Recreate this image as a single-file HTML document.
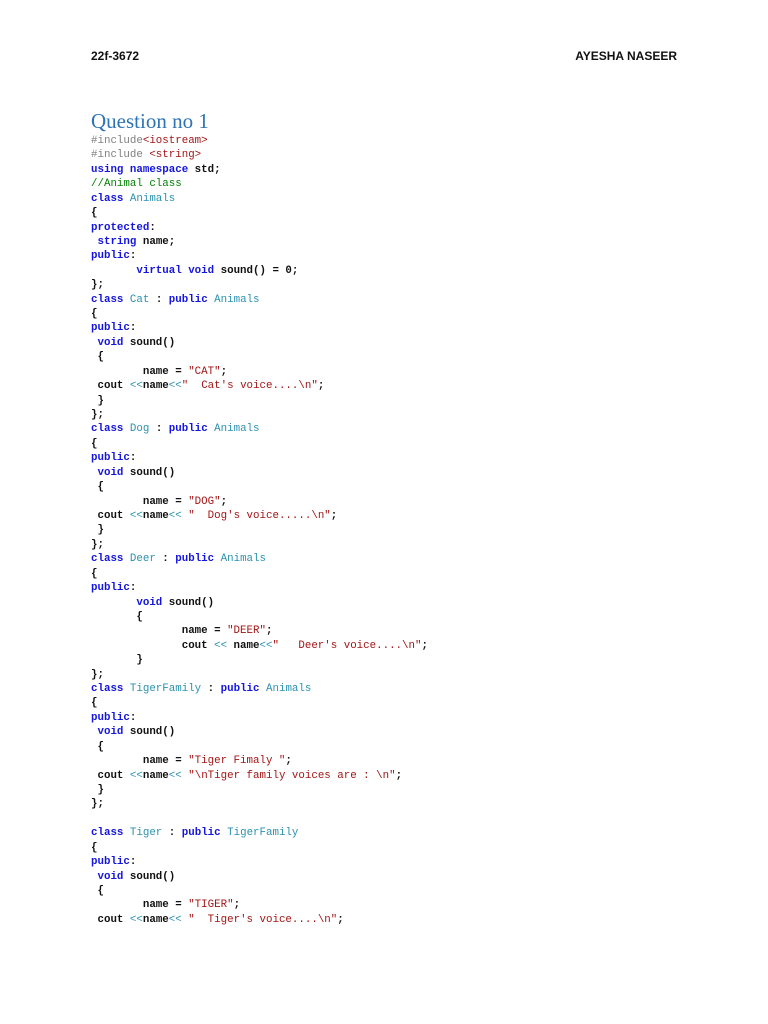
<!DOCTYPE html>
<html><head><meta charset="utf-8"><style>
body{margin:0;width:768px;height:1024px;background:#fff;position:relative;overflow:hidden}
.h{position:absolute;top:49px;font:bold 12px "Liberation Sans",sans-serif;color:#111}
.t{position:absolute;left:91px;top:109px;font:21px "Liberation Serif",serif;color:#2e74b5}
pre{position:absolute;left:91px;top:134px;margin:0;font:bold 10.8px/14.42px "Liberation Mono",monospace;color:#111}
.k{color:#1515e0}.c{color:#2b91af;font-weight:normal}.s{color:#a31515;font-weight:normal}.p{color:#808080;font-weight:normal}.g{color:#008000;font-weight:normal}.o{color:#2b91af;font-weight:normal}
</style></head><body>
<div class="h" style="left:91px">22f-3672</div>
<div class="h" style="right:91px">AYESHA NASEER</div>
<div class="t">Question no 1</div>
<pre><span class="p">#include</span><span class="s">&lt;iostream&gt;</span>
<span class="p">#include</span> <span class="s">&lt;string&gt;</span>
<span class="k">using namespace</span> std;
<span class="g">//Animal class</span>
<span class="k">class</span> <span class="c">Animals</span>
{
<span class="k">protected</span>:
 <span class="k">string</span> name;
<span class="k">public</span>:
       <span class="k">virtual void</span> sound() = 0;
};
<span class="k">class</span> <span class="c">Cat</span> : <span class="k">public</span> <span class="c">Animals</span>
{
<span class="k">public</span>:
 <span class="k">void</span> sound()
 {
        name = <span class="s">"CAT"</span>;
 cout <span class="o">&lt;&lt;</span>name<span class="o">&lt;&lt;</span><span class="s">"  Cat's voice....\n"</span>;
 }
};
<span class="k">class</span> <span class="c">Dog</span> : <span class="k">public</span> <span class="c">Animals</span>
{
<span class="k">public</span>:
 <span class="k">void</span> sound()
 {
        name = <span class="s">"DOG"</span>;
 cout <span class="o">&lt;&lt;</span>name<span class="o">&lt;&lt;</span> <span class="s">"  Dog's voice.....\n"</span>;
 }
};
<span class="k">class</span> <span class="c">Deer</span> : <span class="k">public</span> <span class="c">Animals</span>
{
<span class="k">public</span>:
       <span class="k">void</span> sound()
       {
              name = <span class="s">"DEER"</span>;
              cout <span class="o">&lt;&lt;</span> name<span class="o">&lt;&lt;</span><span class="s">"   Deer's voice....\n"</span>;
       }
};
<span class="k">class</span> <span class="c">TigerFamily</span> : <span class="k">public</span> <span class="c">Animals</span>
{
<span class="k">public</span>:
 <span class="k">void</span> sound()
 {
        name = <span class="s">"Tiger Fimaly "</span>;
 cout <span class="o">&lt;&lt;</span>name<span class="o">&lt;&lt;</span> <span class="s">"\nTiger family voices are : \n"</span>;
 }
};

<span class="k">class</span> <span class="c">Tiger</span> : <span class="k">public</span> <span class="c">TigerFamily</span>
{
<span class="k">public</span>:
 <span class="k">void</span> sound()
 {
        name = <span class="s">"TIGER"</span>;
 cout <span class="o">&lt;&lt;</span>name<span class="o">&lt;&lt;</span> <span class="s">"  Tiger's voice....\n"</span>;
</pre>
</body></html>
